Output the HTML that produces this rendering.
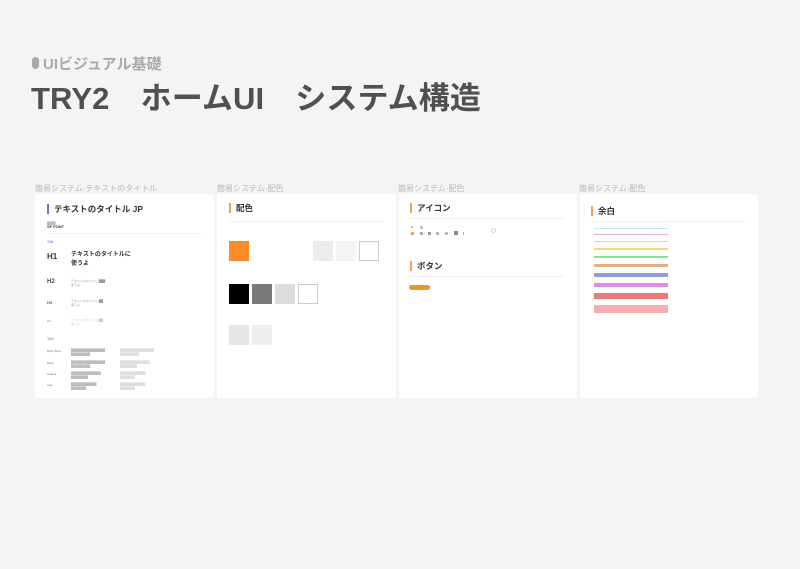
<!DOCTYPE html>
<html><head><meta charset="utf-8"><style>
*{margin:0;padding:0;box-sizing:border-box}
body{width:800px;height:569px;background:#f4f4f4;font-family:"Liberation Sans","Noto Sans CJK JP",sans-serif;position:relative;overflow:hidden}
.a{position:absolute}
.card{position:absolute;top:194px;height:204px;background:#fff}
.lbl{position:absolute;top:183px;font-size:8px;color:#b9b9b9;white-space:nowrap}
.h{position:absolute;font-size:8.5px;font-weight:bold;color:#333;white-space:nowrap;padding-left:5px;border-left:2px solid #f0a050;line-height:10px}
.dv{position:absolute;height:1px;background:#f0f0f0}
.sq{position:absolute;width:20px;height:20px}
.t{position:absolute;font-size:3px;color:#bbb;line-height:4px;white-space:nowrap}
.ln{position:absolute;left:594px;width:74px}
</style></head><body>
<div class="a" style="left:32px;top:57px;width:7px;height:12px;border-radius:4px;background:#aaa"></div>
<div class="a" style="left:43px;top:53px;font-size:15px;font-weight:bold;color:#aaa;white-space:nowrap">UIビジュアル基礎</div>
<div class="a" style="left:31px;top:73px;font-size:31px;font-weight:bold;color:#505050;white-space:nowrap;letter-spacing:0.1px">TRY2　ホームUI　システム構造</div>

<div class="lbl" style="left:35px">簡易システム-テキストのタイトル</div>
<div class="lbl" style="left:217px">簡易システム-配色</div>
<div class="lbl" style="left:398px">簡易システム-配色</div>
<div class="lbl" style="left:579px">簡易システム-配色</div>

<div class="card" style="left:35px;width:179px"></div>
<div class="card" style="left:217px;width:179px"></div>
<div class="card" style="left:399px;width:178px"></div>
<div class="card" style="left:580px;width:178px"></div>

<!-- panel1 -->
<div class="h" style="left:47px;top:204px;border-color:#7070d0">テキストのタイトル JP</div>
<div class="t" style="left:47px;top:221px">████</div>
<div class="a" style="left:47px;top:224px;font-size:4px;font-weight:bold;color:#333">SF FONT</div>
<div class="dv" style="left:47px;top:233px;width:155px"></div>
<div class="a" style="left:47px;top:240px;font-size:3.5px;color:#6a6ae0">Title</div>
<div class="a" style="left:47px;top:252px;font-size:8px;font-weight:bold;color:#333">H1</div>
<div class="a" style="left:71px;top:251px;font-size:6px;font-weight:bold;color:#333;line-height:9px">テキストのタイトルに<br>使うよ</div>
<div class="a" style="left:47px;top:279px;font-size:6px;font-weight:bold;color:#444">H2</div>
<div class="t" style="left:71px;top:279px;color:#999">テキストのタイトル ███<br>使うよ</div>
<div class="a" style="left:47px;top:300px;font-size:4px;font-weight:bold;color:#555">H3</div>
<div class="t" style="left:71px;top:299px;color:#999">テキストのタイトル ██<br>使うよ</div>
<div class="a" style="left:47px;top:319px;font-size:3px;color:#777">H4</div>
<div class="t" style="left:71px;top:318px;color:#ccc">テキストのタイトル ██<br>使うよ</div>
<div class="a" style="left:47px;top:337px;font-size:3.5px;color:#6a6ae0">Text</div>
<div class="t" style="left:47px;top:349px;color:#777">Body Bold</div><div class="t" style="left:71px;top:348px">████████████████<br>█████████</div><div class="t" style="left:120px;top:348px;color:#ddd">████████████████<br>█████████</div>
<div class="t" style="left:47px;top:361px;color:#777">Body</div><div class="t" style="left:71px;top:360px">████████████████<br>█████████</div><div class="t" style="left:120px;top:360px;color:#ddd">██████████████<br>████████</div>
<div class="t" style="left:47px;top:372px;color:#777">Callout</div><div class="t" style="left:71px;top:371px">██████████████<br>████████</div><div class="t" style="left:120px;top:371px;color:#ddd">████████████<br>███████</div>
<div class="t" style="left:47px;top:383px;color:#777">Cap</div><div class="t" style="left:71px;top:382px">████████████<br>███████</div><div class="t" style="left:120px;top:382px;color:#ddd">████████████<br>███████</div>

<!-- panel2 -->
<div class="h" style="left:229px;top:203px">配色</div>
<div class="dv" style="left:229px;top:221px;width:155px"></div>
<div class="sq" style="left:229px;top:241px;background:#fb8c24"></div>
<div class="sq" style="left:313px;top:241px;background:#ececec"></div>
<div class="sq" style="left:336px;top:241px;background:#f4f4f4"></div>
<div class="sq" style="left:359px;top:241px;border:1px solid #ccc"></div>
<div class="sq" style="left:229px;top:284px;background:#000"></div>
<div class="sq" style="left:252px;top:284px;background:#7a7a7a"></div>
<div class="sq" style="left:275px;top:284px;background:#dcdcdc"></div>
<div class="sq" style="left:298px;top:284px;border:1px solid #ccc"></div>
<div class="sq" style="left:229px;top:325px;background:#e6e6e6"></div>
<div class="sq" style="left:252px;top:325px;background:#eeeeee"></div>

<!-- panel3 -->
<div class="h" style="left:410px;top:203px">アイコン</div>
<div class="dv" style="left:410px;top:218px;width:155px"></div>
<div class="a" style="left:411px;top:226px;width:2px;height:2px;background:#aaa;border-radius:50%"></div>
<div class="a" style="left:420px;top:226px;width:3px;height:3px;border:1px solid #aaa;border-radius:50%"></div>
<div class="a" style="left:411px;top:232px;width:3px;height:3px;background:#f08a24;border-radius:50%"></div>
<div class="a" style="left:420px;top:232px;width:3px;height:3px;background:#999;border-radius:50%"></div>
<div class="a" style="left:428px;top:232px;width:3px;height:3px;background:#999"></div>
<div class="a" style="left:436px;top:232px;width:3px;height:3px;background:#aaa;border-radius:50%"></div>
<div class="a" style="left:445px;top:232px;width:3px;height:3px;background:#aaa;border-radius:50%"></div>
<div class="a" style="left:454px;top:231px;width:4px;height:4px;background:#888"></div>
<div class="a" style="left:463px;top:232px;width:1px;height:3px;background:#aaa"></div>
<div class="a" style="left:491px;top:228px;width:5px;height:5px;border:1px solid #ccc;border-radius:50%"></div>
<div class="h" style="left:410px;top:261px">ボタン</div>
<div class="dv" style="left:410px;top:276px;width:155px"></div>
<div class="a" style="left:409px;top:285px;width:21px;height:5px;border-radius:3px;background:#f39030"></div>

<!-- panel4 -->
<div class="h" style="left:591px;top:206px">余白</div>
<div class="dv" style="left:591px;top:221px;width:155px"></div>
<div class="ln" style="top:228px;height:1px;background:#c8e4fa"></div>
<div class="ln" style="top:234px;height:1px;background:#d2b6f0"></div>
<div class="ln" style="top:241px;height:1px;background:#b8daf6"></div>
<div class="ln" style="top:248px;height:2px;background:#ecdd80"></div>
<div class="ln" style="top:256px;height:2px;background:#8ee092"></div>
<div class="ln" style="top:264px;height:3px;background:#e0b088"></div>
<div class="ln" style="top:273px;height:4px;background:#8c9ce0"></div>
<div class="ln" style="top:283px;height:4px;background:#de8ae8"></div>
<div class="ln" style="top:293px;height:6px;background:#ec7a7a"></div>
<div class="ln" style="top:305px;height:8px;background:#f8aeae"></div>
</body></html>
